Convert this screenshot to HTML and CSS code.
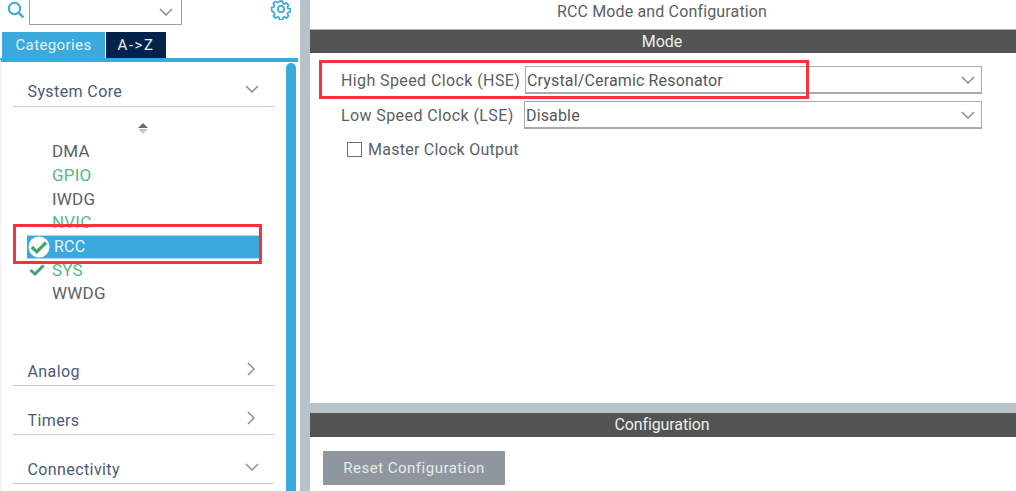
FILE: index.html
```html
<!DOCTYPE html>
<html lang="en">
<head>
  <meta charset="UTF-8" />
  <meta name="viewport" content="width=device-width, initial-scale=1.0"/>
  <title>RCC Mode and Configuration</title>
  <link rel="stylesheet" href="styles.css">
</head>
<body>
  <div class="app">
    <aside class="sidebar">
      <div class="search-row">
        <svg class="search-icon" viewBox="0 0 18 18" width="18" height="18">
          <circle cx="7.5" cy="7.5" r="5.7" fill="none" stroke="#3aa9dc" stroke-width="2"/>
          <path d="M11.8 11.8 L16.5 16.5" stroke="#3aa9dc" stroke-width="2.4" fill="none"/>
        </svg>
        <div class="search-box">
          <svg class="chevron" viewBox="0 0 14 8" width="14" height="8"><path d="M1 1 L7 7 L13 1"/></svg>
        </div>
        <svg class="gear-icon" viewBox="0 0 24 24" width="22" height="22">
          <path d="M10 2h4l.6 2.9 1.9.8 2.5-1.6 2.8 2.8-1.6 2.5.8 1.9 2.9.6v4l-2.9.6-.8 1.9 1.6 2.5-2.8 2.8-2.5-1.6-1.9.8-.6 2.9h-4l-.6-2.9-1.9-.8-2.5 1.6-2.8-2.8 1.6-2.5-.8-1.9L0 14v-4l2.9-.6.8-1.9-1.6-2.5L4.900 2.200l2.500 1.600 1.900-.8z" transform="translate(1.800 1.800) scale(.85)" fill="none" stroke="#3aa9dc" stroke-width="2.200" stroke-linejoin="round"/>
          <circle cx="12" cy="12" r="3.400" fill="none" stroke="#3aa9dc" stroke-width="1.900"/>
        </svg>
      </div>
      <div class="tabs">
        <div class="tab tab-active">Categories</div>
        <div class="tab tab-dark">A-&gt;Z</div>
      </div>
      <div class="tree-wrap">
        <div class="tree">
          <div class="section">
            <span>System Core</span>
            <svg class="chevron" viewBox="0 0 14 8" width="14" height="8"><path d="M1 1 L7 7 L13 1"/></svg>
          </div>
          <div class="peripherals">
            <div class="sort-arrows"><i class="arrow-up"></i><i class="arrow-down"></i></div>
            <ul class="periph-list">
              <li>DMA</li>
              <li class="ok">GPIO</li>
              <li>IWDG</li>
              <li class="ok">NVIC</li>
              <li class="selected">
                <svg class="check-badge" viewBox="0 0 22 22" width="22" height="22">
                  <circle cx="11" cy="11" r="10.500" fill="#fff"/>
                  <path d="M3.800 11 L8.800 15.800 L18 6.500" fill="none" stroke="#3fa66e" stroke-width="3.200"/>
                </svg>
                RCC
              </li>
              <li class="ok">
                <svg class="check" viewBox="0 0 16 12" width="16" height="12"><path d="M1.500 6 L6 10 L14.500 1.500" fill="none" stroke="#3fa66e" stroke-width="3"/></svg>
                SYS
              </li>
              <li>WWDG</li>
            </ul>
          </div>
          <div class="section">
            <span>Analog</span>
            <svg class="chevron-right" viewBox="0 0 8 14" width="8" height="14"><path d="M1 1 L7 7 L1 13"/></svg>
          </div>
          <div class="section">
            <span>Timers</span>
            <svg class="chevron-right" viewBox="0 0 8 14" width="8" height="14"><path d="M1 1 L7 7 L1 13"/></svg>
          </div>
          <div class="section">
            <span>Connectivity</span>
            <svg class="chevron" viewBox="0 0 14 8" width="14" height="8"><path d="M1 1 L7 7 L13 1"/></svg>
          </div>
        </div>
        <div class="scrollbar"></div>
      </div>
    </aside>

    <main class="content">
      <div class="mode-panel">
        <div class="panel-title">RCC Mode and Configuration</div>
        <div class="bar">Mode</div>
        <div class="mode-form">
          <div class="form-row">
            <label class="form-label label-hse">High Speed Clock (HSE)</label>
            <div class="select">
              <span>Crystal/Ceramic Resonator</span>
              <svg class="chevron" viewBox="0 0 14 8" width="14" height="8"><path d="M1 1 L7 7 L13 1"/></svg>
            </div>
          </div>
          <div class="form-row">
            <label class="form-label">Low Speed Clock (LSE)</label>
            <div class="select">
              <span>Disable</span>
              <svg class="chevron" viewBox="0 0 14 8" width="14" height="8"><path d="M1 1 L7 7 L13 1"/></svg>
            </div>
          </div>
          <div class="check-row">
            <span class="checkbox"></span>
            <span>Master Clock Output</span>
          </div>
        </div>
      </div>
      <div class="config-panel">
        <div class="bar">Configuration</div>
        <div class="config-body">
          <div class="reset-btn">Reset Configuration</div>
        </div>
      </div>
    </main>
  </div>

  <!-- red annotation boxes drawn over the screenshot -->
  <div class="mark mark-rcc"></div>
  <div class="mark mark-hse"></div>
</body>
</html>
```

FILE: styles.css
```css
* {
  box-sizing: border-box;
  margin: 0;
  padding: 0;
}

html, body {
  height: 491px;
  overflow: hidden;
}

body {
  position: relative;
  font-family: Roboto, "Liberation Sans", sans-serif;
  font-size: 16px;
  color: #5c6066;
  background: #fff;
}

.app {
  display: flex;
  height: 491px;
  background: #b8c3c9;
}

/* Left column */
.sidebar {
  width: 300px;
  flex-shrink: 0;
  display: flex;
  flex-direction: column;
  background: #fff;
}

.search-row {
  height: 32px;
  display: flex;
  align-items: flex-start;
  padding-left: 7px;
}

.search-icon {
  margin-top: 1px;
}

.search-box {
  width: 153px;
  height: 26px;
  margin-left: 4px;
  margin-top: -1px;
  border: 1px solid #9aa0a5;
  border-top-color: #b8bcc0;
  display: flex;
  align-items: center;
  justify-content: flex-end;
  padding-right: 8px;
}

.gear-icon {
  margin-left: 88px;
  margin-top: -2px;
}

.chevron, .chevron-right {
  flex-shrink: 0;
  fill: none;
  stroke: #8b8f93;
  stroke-width: 1.500;
}

.tabs {
  height: 26px;
  display: flex;
  padding-left: 2px;
  gap: 1px;
}

.tab {
  font-size: 15px;
  display: flex;
  align-items: center;
  justify-content: center;
  color: #e4f2f9;
}

.tab-active {
  width: 103px;
  letter-spacing: 0.4px;
  background: #3aa9dc;
}

.tab-dark {
  width: 60px;
  letter-spacing: 1.500px;
  background: #04234a;
}

.tree-wrap {
  flex: 1;
  min-height: 0;
  display: flex;
  border-top: 4px solid #3aa9dc;
  border-left: 1px solid #eef0f1;
  margin-right: 2px;
  overflow: hidden;
}

.tree {
  width: 285px;
  padding-left: 12px;
  padding-right: 12px;
}

.section {
  height: 49px;
  display: flex;
  align-items: center;
  justify-content: space-between;
  padding: 20px 15px 0 14.500px;
  font-size: 16px;
  letter-spacing: 0.4px;
  color: #4a5a78;
  border-bottom: 1px solid #c3ccd2;
}

.section:first-child {
  height: 45px;
  padding-top: 14px;
}

.section svg {
  margin-bottom: 5px;
}

.chevron-right {
  margin-right: 4px;
}

.peripherals {
  height: 230px;
}

.sort-arrows {
  display: flex;
  flex-direction: column;
  align-items: center;
  gap: 1px;
  padding-top: 16px;
  padding-right: 2px;
  height: 33.300px;
}

.arrow-up, .arrow-down {
  width: 0;
  height: 0;
  border-left: 5px solid transparent;
  border-right: 5px solid transparent;
}

.arrow-up {
  border-bottom: 5px solid #6a6e70;
}

.arrow-down {
  border-top: 5px solid #c4c8ca;
}

.periph-list {
  list-style: none;
}

.periph-list li {
  position: relative;
  height: 23.700px;
  line-height: 23.700px;
  padding-left: 39px;
  font-size: 17px;
  letter-spacing: 0.2px;
  color: #5f6068;
}

.periph-list li.ok {
  color: #55b981;
}

.periph-list li.selected {
  margin-left: 14px;
  margin-right: 13px;
  padding-left: 27px;
  font-size: 16px;
  color: #eaf6fb;
  background: #3aa9dc;
  border-top: 1px solid #a8d8ee;
  border-bottom: 1px solid #a8d8ee;
  line-height: 22px;
}

/* status marks sit in the gutter of the row */
.check-badge {
  position: absolute;
  left: 1px;
  top: 0;
}

.check {
  position: absolute;
  left: 16px;
  top: 5px;
}

.scrollbar {
  width: 10px;
  margin-top: 1px;
  margin-bottom: -10px;
  background: #3aa9dc;
  border-radius: 5px 5px 0 0;
}

/* Right column */
.content {
  flex: 1;
  margin-left: 10px;
  display: flex;
  flex-direction: column;
}

.mode-panel {
  height: 403px;
  flex-shrink: 0;
  background: #fff;
}

.panel-title {
  height: 29px;
  line-height: 24px;
  text-align: center;
  letter-spacing: 0.15px;
  padding-right: 2px;
  color: #5c6066;
}

.bar {
  height: 24px;
  line-height: 24px;
  text-align: center;
  background: #525452;
  color: #eceeee;
  padding-right: 2px;
  border-top: 1px solid #a9adad;
}

.mode-form {
  padding: 13px 34px 0 31px;
}

.form-row {
  display: flex;
  align-items: center;
  height: 28px;
  margin-bottom: 7px;
}

.form-label {
  width: 183px;
  flex-shrink: 0;
  letter-spacing: 0.4px;
  white-space: nowrap;
}

.label-hse {
  width: 184px;
}

.select {
  flex: 1;
  height: 28px;
  display: flex;
  align-items: center;
  justify-content: space-between;
  padding: 1px 6px 0 1px;
  border: 1px solid #a5abaf;
  border-bottom-width: 2px;
  letter-spacing: 0.15px;
  color: #54585c;
}

.check-row {
  display: flex;
  align-items: center;
  gap: 6px;
  padding-left: 6px;
  letter-spacing: 0.25px;
  margin-top: 11px;
}

.checkbox {
  width: 15px;
  height: 15px;
  border: 1.500px solid #6a6e70;
  background: #fff;
}

.config-panel {
  flex: 1;
  background: #fff;
  margin-top: 10px;
}

.config-panel .bar {
  border-top: 0;
  letter-spacing: -0.1px;
}

.config-body {
  padding: 14px 13px;
}

.reset-btn {
  width: 182px;
  height: 34px;
  line-height: 34px;
  text-align: center;
  font-size: 15px;
  background: #8f979e;
  color: #e6e9ea;
  letter-spacing: 0.5px;
}

/* Annotations */
.mark {
  position: absolute;
  border: 3px solid #f4333a;
}

.mark-rcc {
  left: 13px;
  top: 224px;
  width: 249px;
  height: 40px;
}

.mark-hse {
  left: 319px;
  top: 60px;
  width: 490px;
  height: 39px;
}
```
